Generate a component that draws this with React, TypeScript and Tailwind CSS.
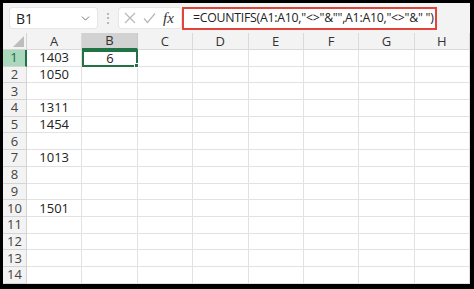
import { ChevronDown } from "lucide-react";

const cols = ["A", "B", "C", "D", "E", "F", "G", "H"];
const colA: Record<number, string> = { 1: "1403", 2: "1050", 4: "1311", 5: "1454", 7: "1013", 10: "1501" };
const rows = Array.from({ length: 14 }, (_, i) => i + 1);
const font = { fontFamily: '"Open Sans", "Noto Sans", sans-serif' };

const Toolbar = () => (
  <div className="h-[30px] bg-[#f3f3f3] flex items-center shrink-0">
    <div className="ml-[7px] w-[87px] h-[20px] bg-white rounded-[3px] flex items-center justify-between pl-[6px] pr-[5px] shadow-[0_0_0_1px_#e6e6e6]">
      <span className="text-[14px] text-[#222]">B1</span>
      <ChevronDown size={13} strokeWidth={1.5} className="text-[#555]" />
    </div>
    <div className="w-[22px] flex justify-center text-[#9a9a9a] text-[12px] leading-none">⋮</div>
    <div className="w-[62px] h-[20px] bg-white rounded-[3px] flex items-center gap-[7px] pl-[5px] shadow-[0_0_0_1px_#e6e6e6]">
      <svg width="12" height="12" viewBox="0 0 12 12" className="text-[#b8b8b8]">
        <path d="M1 1 L11 11 M11 1 L1 11" stroke="currentColor" strokeWidth="1.2" fill="none" />
      </svg>
      <svg width="13" height="12" viewBox="0 0 13 12" className="text-[#b8b8b8]">
        <path d="M1 6.5 L4.5 10.5 L12 1.5" stroke="currentColor" strokeWidth="1.2" fill="none" />
      </svg>
      <span className="italic text-[15px] text-[#333] leading-none" style={{ fontFamily: '"Liberation Serif", serif' }}>fx</span>
    </div>
    <div className="ml-[1px] w-[255px] h-[23px] bg-white border-2 border-[#e2443c] flex items-center pl-[9px] overflow-hidden">
      <span className="text-[12.3px] tracking-[-0.25px] text-[#222] whitespace-nowrap">=COUNTIFS(A1:A10,"&lt;&gt;"&amp;"",A1:A10,"&lt;&gt;"&amp;" ")</span>
    </div>
  </div>
);

const Sheet = () => (
  <div className="grid grid-cols-[24px_repeat(8,1fr)] grid-rows-[17px_repeat(14,16.7px)] text-[13px] leading-none text-[#222]">
    <div className="bg-[#f3f3f3] border-r border-b border-[#d4d4d4] flex items-end justify-end p-[2px]">
      <svg width="11" height="11" viewBox="0 0 11 11"><polygon points="11,0 11,11 0,11" fill="#bdbdbd" /></svg>
    </div>
    {cols.map((c) => (
      <div
        key={c}
        className={
          c === "B"
            ? "bg-[#d2d2d2] border-r border-[#c8c8c8] border-b-2 border-b-[#217346] flex items-center justify-center text-[#333]"
            : "bg-[#f3f3f3] border-r border-b border-[#dadada] flex items-center justify-center text-[#333]"
        }
      >
        {c}
      </div>
    ))}
    {rows.map((r) => (
      <>
        <div
          key={`h${r}`}
          className={
            r === 1
              ? "bg-[#a9d8bc] border-b border-r-2 border-[#217346] border-b-[#d4d4d4] flex items-center justify-center text-[#1d6b40]"
              : "bg-[#f3f3f3] border-r border-b border-[#d4d4d4] flex items-center justify-center text-[#444]"
          }
        >
          {r}
        </div>
        {cols.map((c) =>
          c === "B" && r === 1 ? (
            <div key={`${c}${r}`} className="relative bg-white border-2 border-[#217346] flex items-center justify-center">
              6
              <div className="absolute -right-[3px] -bottom-[3px] w-[5px] h-[5px] bg-[#217346] border border-white" />
            </div>
          ) : (
            <div key={`${c}${r}`} className="bg-white border-r border-b border-[#e2e2e2] flex items-center justify-center">
              {c === "A" ? colA[r] ?? "" : ""}
            </div>
          )
        )}
      </>
    ))}
  </div>
);

export default function App() {
  return (
    <div className="w-[474px] h-[289px] bg-black pt-[3px] pl-[3px] pr-[4px] pb-[5px]" style={font}>
      <div className="w-full h-full bg-white flex flex-col overflow-hidden">
        <Toolbar />
        <Sheet />
      </div>
    </div>
  );
}
